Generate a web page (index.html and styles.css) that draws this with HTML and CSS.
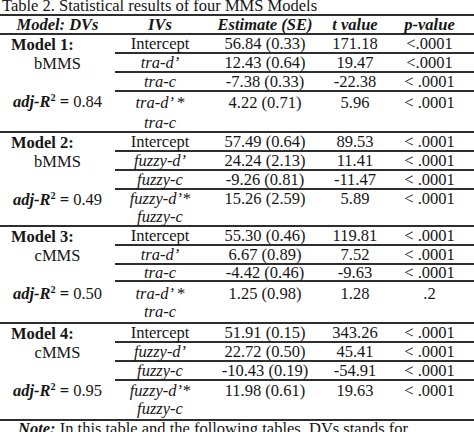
FILE: index.html
```html
<!DOCTYPE html>
<html>
<head>
<meta charset="utf-8">
<link rel="stylesheet" href="styles.css">
</head>
<body>
<div class="page">
  <div class="title">Table 2. Statistical results of four MMS Models</div>
  <div class="table">
    <div class="head">
      <div class="c1">Model: DVs</div>
      <div>IVs</div>
      <div>Estimate (SE)</div>
      <div>t value</div>
      <div>p-value</div>
    </div>

    <section class="model">
      <div class="dv">
        <div class="name">Model 1:</div>
        <div>bMMS</div>
        <div class="adj"><b><i>adj-R</i><sup>2</sup> =</b> 0.84</div>
      </div>
      <div class="rows">
        <div class="row"><div>Intercept</div><div>56.84 (0.33)</div><div>171.18</div><div>&lt;.0001</div></div>
        <div class="row"><div class="iv">tra-d’</div><div>12.43 (0.64)</div><div>19.47</div><div>&lt;.0001</div></div>
        <div class="row"><div class="iv">tra-c</div><div>-7.38 (0.33)</div><div>-22.38</div><div>&lt; .0001</div></div>
        <div class="row double tall"><div class="iv">tra-d’ *<br>tra-c</div><div>4.22 (0.71)</div><div>5.96</div><div>&lt; .0001</div></div>
      </div>
    </section>

    <section class="model">
      <div class="dv">
        <div class="name">Model 2:</div>
        <div>bMMS</div>
        <div class="adj"><b><i>adj-R</i><sup>2</sup> =</b> 0.49</div>
      </div>
      <div class="rows">
        <div class="row"><div>Intercept</div><div>57.49 (0.64)</div><div>89.53</div><div>&lt; .0001</div></div>
        <div class="row"><div class="iv">fuzzy-d’</div><div>24.24 (2.13)</div><div>11.41</div><div>&lt; .0001</div></div>
        <div class="row"><div class="iv">fuzzy-c</div><div>-9.26 (0.81)</div><div>-11.47</div><div>&lt; .0001</div></div>
        <div class="row double short"><div class="iv">fuzzy-d’*<br>fuzzy-c</div><div>15.26 (2.59)</div><div>5.89</div><div>&lt; .0001</div></div>
      </div>
    </section>

    <section class="model">
      <div class="dv">
        <div class="name">Model 3:</div>
        <div>cMMS</div>
        <div class="adj"><b><i>adj-R</i><sup>2</sup> =</b> 0.50</div>
      </div>
      <div class="rows">
        <div class="row"><div>Intercept</div><div>55.30 (0.46)</div><div>119.81</div><div>&lt; .0001</div></div>
        <div class="row"><div class="iv">tra-d’</div><div>6.67 (0.89)</div><div>7.52</div><div>&lt; .0001</div></div>
        <div class="row narrow"><div class="iv">tra-c</div><div>-4.42 (0.46)</div><div>-9.63</div><div>&lt; .0001</div></div>
        <div class="row double low"><div class="iv">tra-d’ *<br>tra-c</div><div>1.25 (0.98)</div><div>1.28</div><div>.2</div></div>
      </div>
    </section>

    <section class="model">
      <div class="dv">
        <div class="name">Model 4:</div>
        <div>cMMS</div>
        <div class="adj"><b><i>adj-R</i><sup>2</sup> =</b> 0.95</div>
      </div>
      <div class="rows">
        <div class="row"><div>Intercept</div><div>51.91 (0.15)</div><div>343.26</div><div>&lt; .0001</div></div>
        <div class="row"><div class="iv">fuzzy-d’</div><div>22.72 (0.50)</div><div>45.41</div><div>&lt; .0001</div></div>
        <div class="row"><div class="iv">fuzzy-c</div><div>-10.43 (0.19)</div><div>-54.91</div><div>&lt; .0001</div></div>
        <div class="row double"><div class="iv">fuzzy-d’*<br>fuzzy-c</div><div>11.98 (0.61)</div><div>19.63</div><div>&lt; .0001</div></div>
      </div>
    </section>
  </div>
  <p class="note"><b><i>Note:</i></b> In this table and the following tables, DVs stands for</p>
</div>
</body>
</html>
```

FILE: styles.css
```css
html, body {
  margin: 0;
  padding: 0;
  background: #ffffff;
}

.page {
  width: 474px;
  height: 432px;
  overflow: hidden;
  font-family: "Liberation Serif", "Times New Roman", serif;
  font-size: 16.5px;
  color: #161616;
}

.title {
  line-height: 11px;
  padding: 0 0 3px 2px;
  white-space: nowrap;
}

.table {
  border-top: 2px solid #2e2e2e;
}

.head {
  display: grid;
  grid-template-columns: 115px 90px 120px 60px 1fr;
  height: 17px;
  line-height: 17px;
  font-weight: bold;
  font-style: italic;
  text-align: center;
  border-bottom: 2px solid #2e2e2e;
}

.model {
  display: grid;
  grid-template-columns: 115px 1fr;
  border-bottom: 2px solid #2e2e2e;
}

.dv {
  line-height: 19px;
  text-align: center;
}

.dv .name {
  font-weight: bold;
  text-align: left;
  padding-left: 11px;
}

.dv .adj {
  margin-top: 19px;
}

.dv sup {
  font-size: 0.62em;
  line-height: 0;
  vertical-align: 0.55em;
}

.rows {
  display: flex;
  flex-direction: column;
}

.row {
  display: grid;
  grid-template-columns: 90px 120px 60px 1fr;
  height: 17px;
  line-height: 17px;
  text-align: center;
  white-space: nowrap;
  border-bottom: 2px solid #2e2e2e;
}

.row.narrow {
  height: 15px;
  line-height: 15px;
}

.row.double {
  height: 37px;
  line-height: 18px;
  padding-top: 1px;
  border-bottom: none;
}

.row.double.tall {
  height: 38px;
  line-height: 20px;
}

.row.double.short {
  height: 35px;
  line-height: 18px;
  padding-top: 0;
  overflow: visible;
}

.row.double.low {
  height: 37px;
  padding-top: 3px;
}

.iv {
  font-style: italic;
}

.note {
  margin: 0;
  padding-left: 18px;
  line-height: 16px;
  white-space: nowrap;
}
```
